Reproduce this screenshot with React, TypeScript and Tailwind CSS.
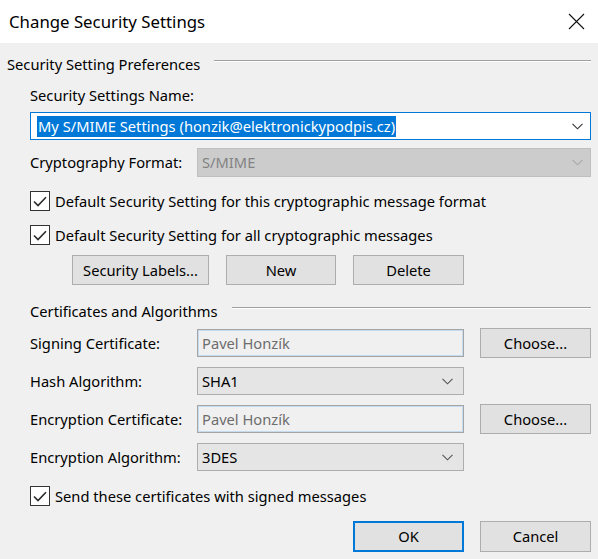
import * as React from 'react';

const ui = "font-['Noto_Sans',sans-serif]";

function Chevron({ color = '#333' }: { color?: string }) {
	return (
		<svg width="11" height="7" viewBox="0 0 11 7" className="shrink-0">
			<path d="M0.5 0.8 L5.5 5.8 L10.5 0.8" fill="none" stroke={color} strokeWidth="1.1" />
		</svg>
	);
}

function CheckRow({ label, className }: { label: string; className?: string }) {
	return (
		<div className={`flex items-center gap-[5px] h-[20px] ${className ?? ''}`}>
			<div className="w-[20px] h-[20px] border border-[#333] bg-white flex items-center justify-center shrink-0">
				<svg width="14" height="11" viewBox="0 0 14 11">
					<path d="M1 5.5 L5 9.5 L13 1.2" fill="none" stroke="#2b2b2b" strokeWidth="1.6" />
				</svg>
			</div>
			<span className="text-[14.7px] text-black leading-none whitespace-nowrap">{label}</span>
		</div>
	);
}

function Btn({ label, width, primary }: { label: string; width: string; primary?: boolean }) {
	return (
		<button
			className={`${width} h-[30px] bg-[#e1e1e1] text-[14.7px] text-black flex items-center justify-center ${
				primary ? 'border-2 border-[#0078d7]' : 'border border-[#adadad]'
			}`}
		>
			{label}
		</button>
	);
}

function GroupHeader({ title, className }: { title: string; className?: string }) {
	return (
		<div className={`flex items-start gap-[14px] ${className ?? ''}`}>
			<span className="text-[14.7px] text-black leading-[22px] whitespace-nowrap">{title}</span>
			<div className="flex-1 mt-[7px] h-[2px] border-t border-[#a0a0a0] border-b border-b-white" />
		</div>
	);
}

function FieldRow({ label, children, className }: { label: string; children: React.ReactNode; className?: string }) {
	return (
		<div className={`flex items-center ${className ?? ''}`}>
			<span className="w-[167px] text-[14.7px] text-black whitespace-nowrap">{label}</span>
			{children}
		</div>
	);
}

function ReadonlyBox({ value }: { value: string }) {
	return (
		<div className="w-[267px] h-[28px] border border-[#a5a5a5] flex">
			<div className="flex-1 border border-[#c4dcf2] flex items-center pl-[3px] text-[14.7px] text-[#6d6d6d]">
				{value}
			</div>
		</div>
	);
}

function Combo({ value }: { value: string }) {
	return (
		<div className="w-[267px] h-[28px] border border-[#adadad] bg-[#e5e5e5] flex items-center justify-between pl-[4px] pr-[10px] text-[14.7px] text-black">
			<span>{value}</span>
			<Chevron color="#555" />
		</div>
	);
}

export default function App() {
	return (
		<div className={`${ui} w-[598px] h-[559px] bg-[#f0f0f0] flex flex-col select-none`}>
			<div className="h-[43px] bg-white flex items-center justify-between pl-[9px] pr-[13px] shrink-0">
				<span className="text-[16.8px] text-black">Change Security Settings</span>
				<svg width="17" height="17" viewBox="0 0 17 17">
					<path d="M1 1 L16 16 M16 1 L1 16" stroke="#111" strokeWidth="1.1" />
				</svg>
			</div>

			<div className="pl-[7px] pr-[7px] flex flex-col">
				<GroupHeader title="Security Setting Preferences" className="mt-[10px]" />

				<div className="pl-[23px] flex flex-col">
					<span className="text-[14.7px] text-black mt-[9px] leading-[22px]">Security Settings Name:</span>

					<div className="mt-[6px] h-[28px] bg-white border border-[#0078d7] flex items-center justify-between pl-[6px] pr-[7px]">
						<span className="bg-[#0078d7] text-white text-[14.7px] leading-[21px] px-[1px] whitespace-nowrap">
							My S/MIME Settings (honzik@elektronickypodpis.cz)
						</span>
						<Chevron />
					</div>

					<FieldRow label="Cryptography Format:" className="mt-[8px]">
						<div className="flex-1 h-[29px] bg-[#cccccc] border border-[#bfbfbf] flex items-center justify-between pl-[4px] pr-[7px] text-[14.7px] text-[#838383]">
							<span>S/MIME</span>
							<Chevron color="#a8a8a8" />
						</div>
					</FieldRow>

					<CheckRow label="Default Security Setting for this cryptographic message format" className="mt-[14px]" />
					<CheckRow label="Default Security Setting for all cryptographic messages" className="mt-[14px]" />

					<div className="flex gap-[17px] mt-[10px] pl-[42px]">
						<Btn label="Security Labels..." width="w-[137px]" />
						<Btn label="New" width="w-[110px]" />
						<Btn label="Delete" width="w-[111px]" />
					</div>

					<GroupHeader title="Certificates and Algorithms" className="mt-[15px]" />

					<FieldRow label="Signing Certificate:" className="mt-[6px]">
						<ReadonlyBox value="Pavel Honzík" />
						<div className="ml-auto">
							<Btn label="Choose..." width="w-[111px]" />
						</div>
					</FieldRow>

					<FieldRow label="Hash Algorithm:" className="mt-[9px]">
						<Combo value="SHA1" />
					</FieldRow>

					<FieldRow label="Encryption Certificate:" className="mt-[9px]">
						<ReadonlyBox value="Pavel Honzík" />
						<div className="ml-auto">
							<Btn label="Choose..." width="w-[111px]" />
						</div>
					</FieldRow>

					<FieldRow label="Encryption Algorithm:" className="mt-[9px]">
						<Combo value="3DES" />
					</FieldRow>

					<CheckRow label="Send these certificates with signed messages" className="mt-[15px]" />

					<div className="flex justify-end gap-[16px] mt-[15px]">
						<Btn label="OK" width="w-[111px] h-[31px]" primary />
						<Btn label="Cancel" width="w-[111px] h-[31px]" />
					</div>
				</div>
			</div>
		</div>
	);
}
